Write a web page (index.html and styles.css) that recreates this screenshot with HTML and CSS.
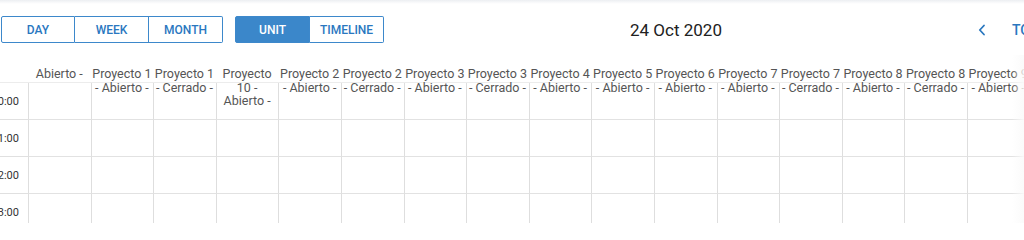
FILE: index.html
```html
<!DOCTYPE html>
<html lang="es">
<head>
<meta charset="utf-8">
<title>Scheduler</title>
<link rel="stylesheet" href="styles.css">
</head>
<body>
<div class="app">
  <header class="toolbar">
    <div class="views">
      <div class="btn-group">
        <button class="btn">DAY</button>
        <button class="btn">WEEK</button>
        <button class="btn">MONTH</button>
      </div>
      <div class="btn-group">
        <button class="btn active">UNIT</button>
        <button class="btn">TIMELINE</button>
      </div>
    </div>
    <div class="title">24 Oct 2020</div>
    <div class="nav">
      <button class="nav-prev" aria-label="Previous">
        <svg width="8" height="12" viewBox="0 0 8 12"><polyline points="6,1.5 1.8,6 6,10.5" fill="none" stroke="#2a77bf" stroke-width="1.8" stroke-linecap="round" stroke-linejoin="round"/></svg>
      </button>
      <button class="nav-today">TODAY</button>
    </div>
  </header>

  <section class="scheduler">
    <div class="grid">
      <div class="corner"></div>
      <div class="col-head">Abierto -</div>
      <div class="col-head">Proyecto 1 - Abierto -</div>
      <div class="col-head">Proyecto 1 - Cerrado -</div>
      <div class="col-head">Proyecto 10 - Abierto -</div>
      <div class="col-head">Proyecto 2 - Abierto -</div>
      <div class="col-head">Proyecto 2 - Cerrado -</div>
      <div class="col-head">Proyecto 3 - Abierto -</div>
      <div class="col-head">Proyecto 3 - Cerrado -</div>
      <div class="col-head">Proyecto 4 - Abierto -</div>
      <div class="col-head">Proyecto 5 - Abierto -</div>
      <div class="col-head">Proyecto 6 - Abierto -</div>
      <div class="col-head">Proyecto 7 - Abierto -</div>
      <div class="col-head">Proyecto 7 - Cerrado -</div>
      <div class="col-head">Proyecto 8 - Abierto -</div>
      <div class="col-head">Proyecto 8 - Cerrado -</div>
      <div class="col-head">Proyecto 9 - Abierto -</div>
      <div class="col-head">Proyecto 9 - Cerrado -</div>
    </div>
    <div class="grid body" id="body"></div>
    <div class="fade"></div>
  </section>
</div>
<script>
  (function () {
    var body = document.getElementById('body');
    var html = '';
    for (var h = 0; h < 5; h++) {
      html += '<div class="time"><span>' + (h < 10 ? '0' : '') + h + ':00</span></div>';
      for (var c = 0; c < 17; c++) html += '<div class="cell"></div>';
    }
    body.innerHTML = html;
  })();
</script>
</body>
</html>
```

FILE: styles.css
```css
* { box-sizing: border-box; }

html, body {
  margin: 0;
  padding: 0;
  background: #fff;
  overflow: hidden;
}

body {
  font-family: Roboto, "Liberation Sans", Arial, sans-serif;
  color: #212121;
}

.app {
  width: 1024px;
  height: 223px;
  overflow: hidden;
}

/* ---------- toolbar ---------- */
.toolbar {
  display: flex;
  align-items: center;
  height: 55px;
  padding: 16px 0 12px 1px;
  background: linear-gradient(to bottom, #eceef2 0, #f6f7f9 2px, #ffffff 4px);
}

.views {
  display: flex;
  gap: 12px;
}

.btn-group {
  display: flex;
}

.btn {
  width: 74px;
  height: 27px;
  margin: 0;
  padding: 0;
  border: 1px solid #3d88cb;
  background: #fff;
  color: #2a77bf;
  font-family: Roboto, "Liberation Sans", Arial, sans-serif;
  font-size: 12px;
  font-weight: 500;
  cursor: pointer;
}

.btn + .btn { border-left: 0; }
.btn:first-child { border-radius: 2px 0 0 2px; }
.btn:last-child { border-radius: 0 2px 2px 0; }

.btn.active {
  background: #3b87ca;
  color: #fff;
  width: 75px;
}

.title {
  flex: 1;
  text-align: center;
  font-size: 17px;
  color: #212121;
}

.nav {
  width: 56px;
  display: flex;
  align-items: center;
  overflow: hidden;
  white-space: nowrap;
}

.nav-prev {
  flex: none;
  width: 28px;
  height: 27px;
  padding: 0;
  border: 0;
  background: none;
  display: flex;
  align-items: center;
  justify-content: center;
}

.nav-today {
  flex: none;
  margin-left: 16px;
  padding: 0;
  border: 0;
  background: none;
  color: #2a77bf;
  font-family: Roboto, "Liberation Sans", Arial, sans-serif;
  font-size: 14px;
  font-weight: 500;
}

/* ---------- scheduler grid ---------- */
.scheduler {
  position: relative;
  width: 1024px;
  overflow: hidden;
}

.grid {
  display: grid;
  grid-template-columns: 28px repeat(17, 62.6px);
  width: max-content;
}

.corner,
.col-head {
  height: 28px;
  border-bottom: 1px solid #ececec;
}

.col-head {
  padding-top: 12px;
  font-size: 12.5px;
  line-height: 13.5px;
  color: #555;
  text-align: center;
  overflow: visible;
  position: relative;
  z-index: 1;
}

.body {
  grid-auto-rows: 37px;
}

.time {
  display: flex;
  align-items: center;
  justify-content: flex-end;
  padding-right: 9px;
  overflow: hidden;
  border-bottom: 1px solid #e0e0e0;
  font-size: 11px;
  color: #333;
  white-space: nowrap;
}

.cell {
  border-left: 1px solid #dedede;
  border-bottom: 1px solid #e2e2e2;
}

.fade {
  position: absolute;
  top: 0;
  right: 0;
  width: 12px;
  height: 100%;
  background: linear-gradient(to right, rgba(255,255,255,0), rgba(250,250,250,0.9));
  z-index: 2;
}
```
